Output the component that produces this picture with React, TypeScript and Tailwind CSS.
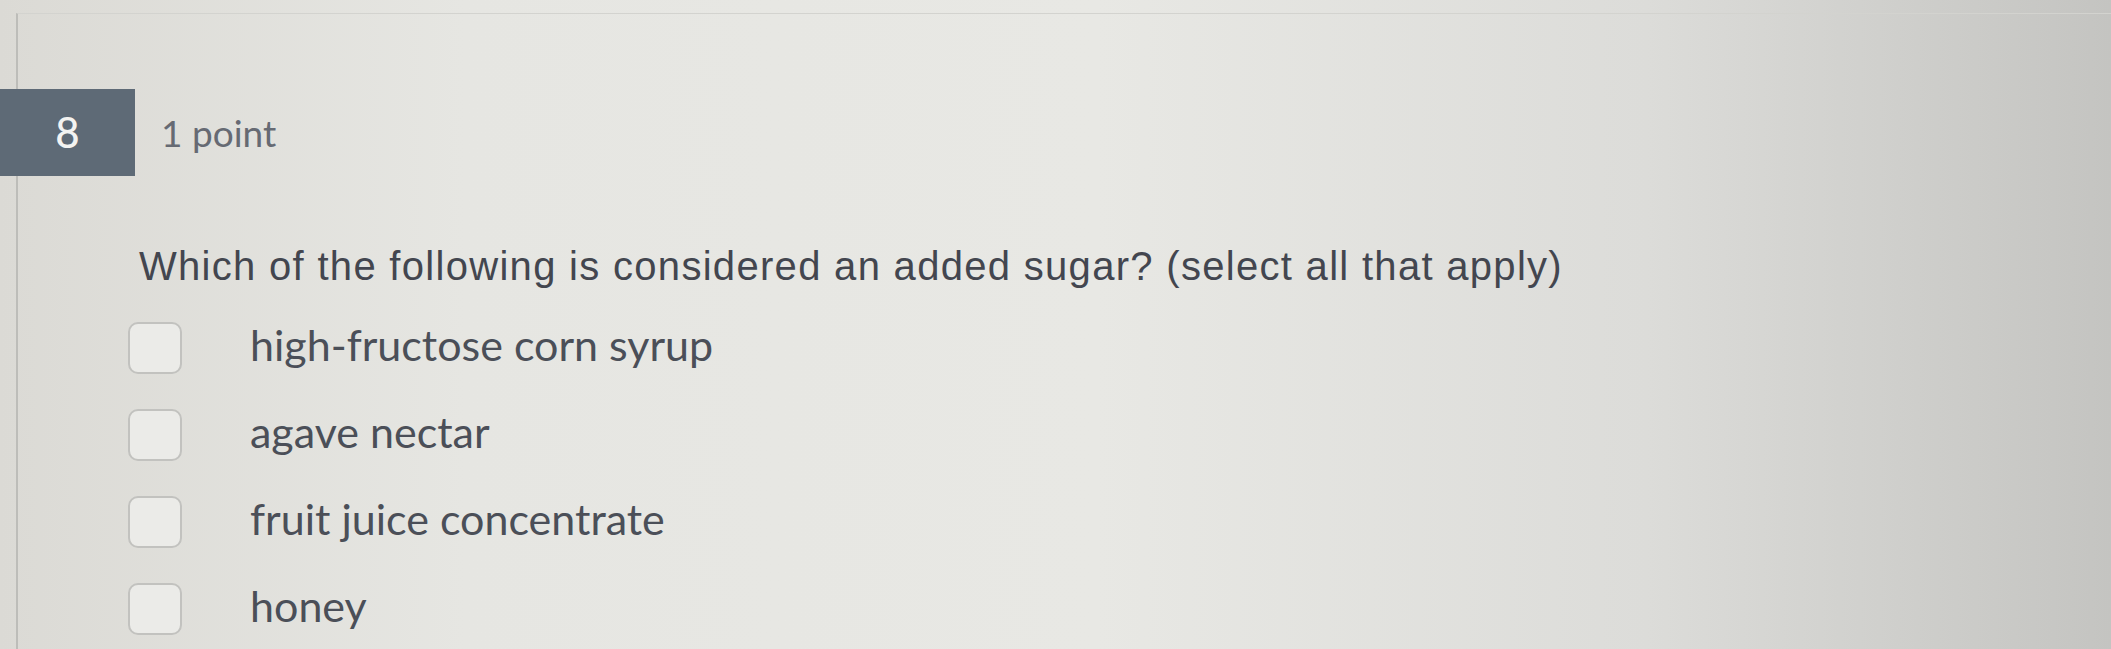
import React from "react";

const options = [
  "high-fructose corn syrup",
  "agave nectar",
  "fruit juice concentrate",
  "honey",
];

export default function App() {
  return (
    <div className="h-[649px] overflow-hidden pt-[13px] bg-[linear-gradient(90deg,#dbdad5_0%,#e6e6e2_22%,#e8e8e4_52%,#dcdcd9_78%,#c4c4c1_100%)]">
      <div className="ml-[16px] h-[700px] border-l-2 border-l-[#bdbdb9] border-t border-t-[#d3d3cf]">
        {/* question header */}
        <div className="mt-[75px] flex items-center">
          <div className="-ml-[18px] flex h-[87px] w-[135px] items-center justify-center bg-[#5e6a76] font-['Lato','Liberation_Sans',sans-serif] text-[42px] font-medium text-[#f3f3f1]">
            8
          </div>
          <div className="ml-[26px] font-['Lato','Liberation_Sans',sans-serif] text-[37px] text-[#666a73]">
            1 point
          </div>
        </div>

        <div className="ml-[121px] mt-[70px] font-['Liberation_Sans',Arial,sans-serif] text-[40px] leading-[40px] tracking-[1.3px] text-[#43464f]">
          Which of the following is considered an added sugar? (select all that apply)
        </div>

        <ul className="mt-[14px]">
          {options.map((opt) => (
            <li key={opt} className="flex h-[87px] items-center">
              <span className="ml-[110px] mt-[9px] h-[52px] w-[54px] shrink-0 rounded-[10px] border-2 border-[#c2c2bf] bg-[#ebebe8]" />
              <span className="ml-[68px] mt-[4px] font-['Lato','Liberation_Sans',sans-serif] text-[43px] text-[#4b4f58]">
                {opt}
              </span>
            </li>
          ))}
        </ul>
      </div>
    </div>
  );
}
